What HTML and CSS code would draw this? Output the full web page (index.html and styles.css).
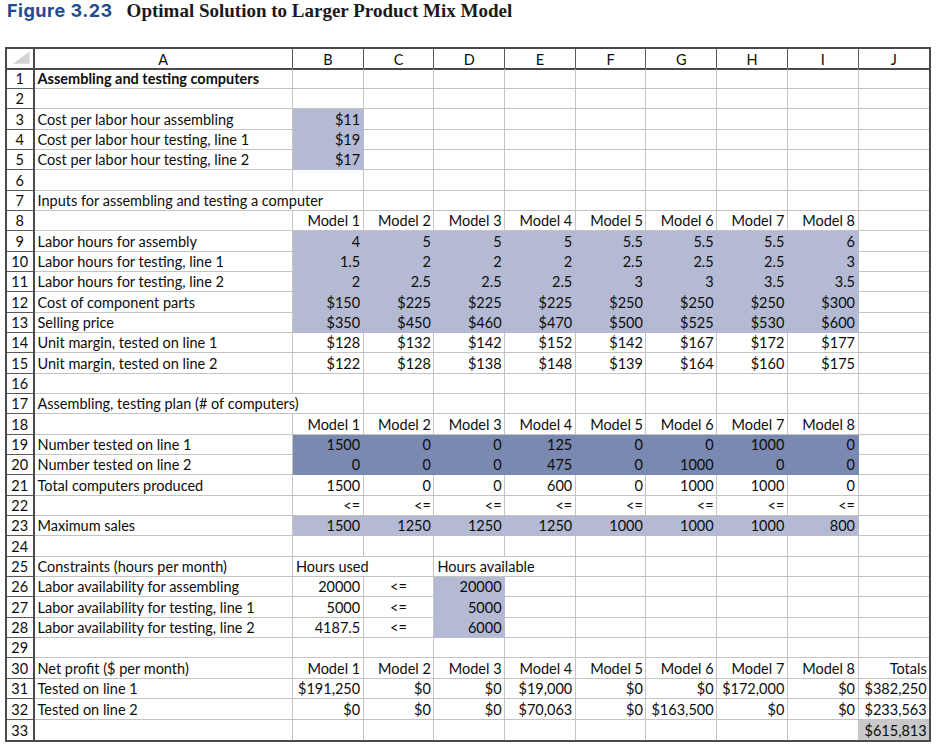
FILE: index.html
```html
<!DOCTYPE html>
<html>
<head>
<meta charset="utf-8">
<link rel="stylesheet" href="styles.css">
</head>
<body>
<div class="title"><span class="fig">Figure 3.23</span><span class="cap">Optimal Solution to Larger Product Mix Model</span></div>
<div class="sheet">
  <div class="hdr">
    <div class="h corner"><svg width="27" height="19" viewBox="0 0 27 19"><polygon points="6,15 24,2 24,15" fill="#d4d4d4"/></svg></div>
    <div class="h">A</div><div class="h">B</div><div class="h">C</div><div class="h">D</div><div class="h">E</div><div class="h">F</div><div class="h">G</div><div class="h">H</div><div class="h">I</div><div class="h">J</div>
  </div>
  <div class="r"><div class="n">1</div><div class="c b">Assembling and testing computers</div><div class="c"></div><div class="c"></div><div class="c"></div><div class="c"></div><div class="c"></div><div class="c"></div><div class="c"></div><div class="c"></div><div class="c"></div></div>
  <div class="r"><div class="n">2</div><div class="c"></div><div class="c"></div><div class="c"></div><div class="c"></div><div class="c"></div><div class="c"></div><div class="c"></div><div class="c"></div><div class="c"></div><div class="c"></div></div>
  <div class="r"><div class="n">3</div><div class="c">Cost per labor hour assembling</div><div class="c v f1">$11</div><div class="c"></div><div class="c"></div><div class="c"></div><div class="c"></div><div class="c"></div><div class="c"></div><div class="c"></div><div class="c"></div></div>
  <div class="r"><div class="n">4</div><div class="c">Cost per labor hour testing, line 1</div><div class="c v f1">$19</div><div class="c"></div><div class="c"></div><div class="c"></div><div class="c"></div><div class="c"></div><div class="c"></div><div class="c"></div><div class="c"></div></div>
  <div class="r"><div class="n">5</div><div class="c">Cost per labor hour testing, line 2</div><div class="c v f1">$17</div><div class="c"></div><div class="c"></div><div class="c"></div><div class="c"></div><div class="c"></div><div class="c"></div><div class="c"></div><div class="c"></div></div>
  <div class="r"><div class="n">6</div><div class="c"></div><div class="c"></div><div class="c"></div><div class="c"></div><div class="c"></div><div class="c"></div><div class="c"></div><div class="c"></div><div class="c"></div><div class="c"></div></div>
  <div class="r"><div class="n">7</div><div class="c s2">Inputs for assembling and testing a computer</div><div class="c"></div><div class="c"></div><div class="c"></div><div class="c"></div><div class="c"></div><div class="c"></div><div class="c"></div><div class="c"></div></div>
  <div class="r"><div class="n">8</div><div class="c"></div><div class="c v">Model 1</div><div class="c v">Model 2</div><div class="c v">Model 3</div><div class="c v">Model 4</div><div class="c v">Model 5</div><div class="c v">Model 6</div><div class="c v">Model 7</div><div class="c v">Model 8</div><div class="c"></div></div>
  <div class="r"><div class="n">9</div><div class="c">Labor hours for assembly</div><div class="c v f1">4</div><div class="c v f1">5</div><div class="c v f1">5</div><div class="c v f1">5</div><div class="c v f1">5.5</div><div class="c v f1">5.5</div><div class="c v f1">5.5</div><div class="c v f1">6</div><div class="c"></div></div>
  <div class="r"><div class="n">10</div><div class="c">Labor hours for testing, line 1</div><div class="c v f1">1.5</div><div class="c v f1">2</div><div class="c v f1">2</div><div class="c v f1">2</div><div class="c v f1">2.5</div><div class="c v f1">2.5</div><div class="c v f1">2.5</div><div class="c v f1">3</div><div class="c"></div></div>
  <div class="r"><div class="n">11</div><div class="c">Labor hours for testing, line 2</div><div class="c v f1">2</div><div class="c v f1">2.5</div><div class="c v f1">2.5</div><div class="c v f1">2.5</div><div class="c v f1">3</div><div class="c v f1">3</div><div class="c v f1">3.5</div><div class="c v f1">3.5</div><div class="c"></div></div>
  <div class="r"><div class="n">12</div><div class="c">Cost of component parts</div><div class="c v f1">$150</div><div class="c v f1">$225</div><div class="c v f1">$225</div><div class="c v f1">$225</div><div class="c v f1">$250</div><div class="c v f1">$250</div><div class="c v f1">$250</div><div class="c v f1">$300</div><div class="c"></div></div>
  <div class="r"><div class="n">13</div><div class="c">Selling price</div><div class="c v f1">$350</div><div class="c v f1">$450</div><div class="c v f1">$460</div><div class="c v f1">$470</div><div class="c v f1">$500</div><div class="c v f1">$525</div><div class="c v f1">$530</div><div class="c v f1">$600</div><div class="c"></div></div>
  <div class="r"><div class="n">14</div><div class="c">Unit margin, tested on line 1</div><div class="c v">$128</div><div class="c v">$132</div><div class="c v">$142</div><div class="c v">$152</div><div class="c v">$142</div><div class="c v">$167</div><div class="c v">$172</div><div class="c v">$177</div><div class="c"></div></div>
  <div class="r"><div class="n">15</div><div class="c">Unit margin, tested on line 2</div><div class="c v">$122</div><div class="c v">$128</div><div class="c v">$138</div><div class="c v">$148</div><div class="c v">$139</div><div class="c v">$164</div><div class="c v">$160</div><div class="c v">$175</div><div class="c"></div></div>
  <div class="r"><div class="n">16</div><div class="c"></div><div class="c"></div><div class="c"></div><div class="c"></div><div class="c"></div><div class="c"></div><div class="c"></div><div class="c"></div><div class="c"></div><div class="c"></div></div>
  <div class="r"><div class="n">17</div><div class="c s2">Assembling, testing plan (# of computers)</div><div class="c"></div><div class="c"></div><div class="c"></div><div class="c"></div><div class="c"></div><div class="c"></div><div class="c"></div><div class="c"></div></div>
  <div class="r"><div class="n">18</div><div class="c"></div><div class="c v">Model 1</div><div class="c v">Model 2</div><div class="c v">Model 3</div><div class="c v">Model 4</div><div class="c v">Model 5</div><div class="c v">Model 6</div><div class="c v">Model 7</div><div class="c v">Model 8</div><div class="c"></div></div>
  <div class="r"><div class="n">19</div><div class="c">Number tested on line 1</div><div class="c v f2">1500</div><div class="c v f2">0</div><div class="c v f2">0</div><div class="c v f2">125</div><div class="c v f2">0</div><div class="c v f2">0</div><div class="c v f2">1000</div><div class="c v f2">0</div><div class="c"></div></div>
  <div class="r"><div class="n">20</div><div class="c">Number tested on line 2</div><div class="c v f2">0</div><div class="c v f2">0</div><div class="c v f2">0</div><div class="c v f2">475</div><div class="c v f2">0</div><div class="c v f2">1000</div><div class="c v f2">0</div><div class="c v f2">0</div><div class="c"></div></div>
  <div class="r"><div class="n">21</div><div class="c">Total computers produced</div><div class="c v">1500</div><div class="c v">0</div><div class="c v">0</div><div class="c v">600</div><div class="c v">0</div><div class="c v">1000</div><div class="c v">1000</div><div class="c v">0</div><div class="c"></div></div>
  <div class="r"><div class="n">22</div><div class="c"></div><div class="c v">&lt;=</div><div class="c v">&lt;=</div><div class="c v">&lt;=</div><div class="c v">&lt;=</div><div class="c v">&lt;=</div><div class="c v">&lt;=</div><div class="c v">&lt;=</div><div class="c v">&lt;=</div><div class="c"></div></div>
  <div class="r"><div class="n">23</div><div class="c">Maximum sales</div><div class="c v f1">1500</div><div class="c v f1">1250</div><div class="c v f1">1250</div><div class="c v f1">1250</div><div class="c v f1">1000</div><div class="c v f1">1000</div><div class="c v f1">1000</div><div class="c v f1">800</div><div class="c"></div></div>
  <div class="r"><div class="n">24</div><div class="c"></div><div class="c"></div><div class="c"></div><div class="c"></div><div class="c"></div><div class="c"></div><div class="c"></div><div class="c"></div><div class="c"></div><div class="c"></div></div>
  <div class="r"><div class="n">25</div><div class="c">Constraints (hours per month)</div><div class="c s2">Hours used</div><div class="c s2">Hours available</div><div class="c"></div><div class="c"></div><div class="c"></div><div class="c"></div><div class="c"></div></div>
  <div class="r"><div class="n">26</div><div class="c">Labor availability for assembling</div><div class="c v">20000</div><div class="c m">&lt;=</div><div class="c v f1">20000</div><div class="c"></div><div class="c"></div><div class="c"></div><div class="c"></div><div class="c"></div><div class="c"></div></div>
  <div class="r"><div class="n">27</div><div class="c">Labor availability for testing, line 1</div><div class="c v">5000</div><div class="c m">&lt;=</div><div class="c v f1">5000</div><div class="c"></div><div class="c"></div><div class="c"></div><div class="c"></div><div class="c"></div><div class="c"></div></div>
  <div class="r"><div class="n">28</div><div class="c">Labor availability for testing, line 2</div><div class="c v">4187.5</div><div class="c m">&lt;=</div><div class="c v f1">6000</div><div class="c"></div><div class="c"></div><div class="c"></div><div class="c"></div><div class="c"></div><div class="c"></div></div>
  <div class="r"><div class="n">29</div><div class="c"></div><div class="c"></div><div class="c"></div><div class="c"></div><div class="c"></div><div class="c"></div><div class="c"></div><div class="c"></div><div class="c"></div><div class="c"></div></div>
  <div class="r"><div class="n">30</div><div class="c">Net profit ($ per month)</div><div class="c v">Model 1</div><div class="c v">Model 2</div><div class="c v">Model 3</div><div class="c v">Model 4</div><div class="c v">Model 5</div><div class="c v">Model 6</div><div class="c v">Model 7</div><div class="c v">Model 8</div><div class="c v">Totals</div></div>
  <div class="r"><div class="n">31</div><div class="c">Tested on line 1</div><div class="c v">$191,250</div><div class="c v">$0</div><div class="c v">$0</div><div class="c v">$19,000</div><div class="c v">$0</div><div class="c v">$0</div><div class="c v">$172,000</div><div class="c v">$0</div><div class="c v">$382,250</div></div>
  <div class="r"><div class="n">32</div><div class="c">Tested on line 2</div><div class="c v">$0</div><div class="c v">$0</div><div class="c v">$0</div><div class="c v">$70,063</div><div class="c v">$0</div><div class="c v">$163,500</div><div class="c v">$0</div><div class="c v">$0</div><div class="c v">$233,563</div></div>
  <div class="r"><div class="n">33</div><div class="c"></div><div class="c"></div><div class="c"></div><div class="c"></div><div class="c"></div><div class="c"></div><div class="c"></div><div class="c"></div><div class="c"></div><div class="c v f3">$615,813</div></div>
</div>
</body>
</html>
```
FILE: styles.css
```css
html, body {
  margin: 0;
  padding: 0;
  background: #ffffff;
}
.title {
  height: 24px;
  padding-left: 7px;
  white-space: nowrap;
  color: #1a1a1a;
}
.fig {
  font-family: Inter, "Open Sans", sans-serif;
  font-weight: 700;
  font-size: 18px;
  letter-spacing: 0.5px;
  color: #1e4d8f;
  margin-right: 14px;
}
.cap {
  font-family: "Liberation Serif", serif;
  font-weight: 700;
  font-size: 19px;
}
.sheet {
  margin: 22.5px 0 0 5px;
  width: 922.3px;
  border: 2px solid #4a4a4a;
  font-family: Lato, "Noto Sans", sans-serif;
  font-size: 14.5px;
  color: #0d0d0d;
}
.hdr, .r {
  display: grid;
  grid-template-columns: 27.5px 258.5px repeat(9, 70.7px);
}
.hdr {
  height: 20px;
}
.r {
  height: 20.35px;
}
.h {
  box-sizing: border-box;
  border-right: 1px solid #5a5a5a;
  border-bottom: 2px solid #4a4a4a;
  display: flex;
  align-items: flex-end;
  justify-content: center;
  padding-bottom: 0;
  line-height: 17px;
}
.h:last-child {
  border-right: 0;
}
.corner {
  border-right: 2px solid #4a4a4a;
  padding: 0;
  align-items: stretch;
}
.corner svg {
  display: block;
}
.n {
  box-sizing: border-box;
  border-right: 2px solid #4a4a4a;
  border-bottom: 1px solid #5a5a5a;
  display: flex;
  align-items: flex-end;
  justify-content: center;
  padding-bottom: 1px;
  line-height: 17px;
}
.c {
  box-sizing: border-box;
  border-right: 1px solid #c4c4c4;
  border-bottom: 1px solid #c4c4c4;
  display: flex;
  align-items: flex-end;
  padding: 0 3px 1px 3px;
  line-height: 17px;
  white-space: nowrap;
  overflow: visible;
}
.c:last-child {
  border-right: 0;
}
.r:last-child .c, .r:last-child .n {
  border-bottom: 0;
}
.b {
  font-weight: 700;
}
.v {
  justify-content: flex-end;
  padding-right: 2.5px;
}
.m {
  justify-content: center;
}
.s2 {
  grid-column: span 2;
}
.f1 {
  background: #b4bad3;
  border-color: #b4bad3;
}
.f2 {
  background: #7a89b0;
  border-color: #7a89b0;
}
.f3 {
  background: #c9c9c9;
  border-color: #c9c9c9;
}
```
